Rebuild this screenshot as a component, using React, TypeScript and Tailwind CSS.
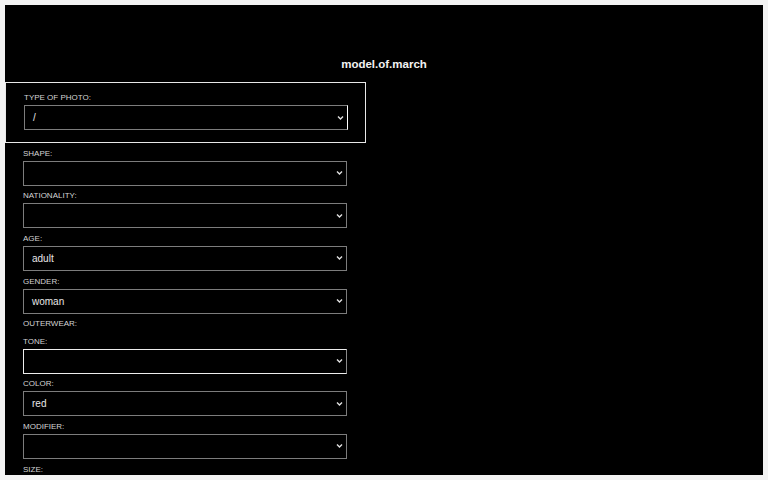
import React from "react";

type Field = {
  label: string;
  value?: string;
  heading?: boolean;
  focus?: boolean;
};

const fields: Field[] = [
  { label: "SHAPE:" },
  { label: "NATIONALITY:" },
  { label: "AGE:", value: "adult" },
  { label: "GENDER:", value: "woman" },
  { label: "OUTERWEAR:", heading: true },
  { label: "TONE:", focus: true },
  { label: "COLOR:", value: "red" },
  { label: "MODIFIER:" },
  { label: "SIZE:" },
];

function Chevron() {
  return (
    <svg
      className="pointer-events-none absolute right-[4px] top-1/2 -translate-y-1/2"
      width="7"
      height="5"
      viewBox="0 0 7 5"
      fill="none"
    >
      <path d="M1 1l2.5 2.5L6 1" stroke="#e0e0e0" strokeWidth="1.4" />
    </svg>
  );
}

function Select({ value, className }: { value?: string; className: string }) {
  return (
    <div className="relative">
      <div
        className={
          "h-[25px] border pl-2 text-[10px] leading-[23px] text-[#e8e8e8] " +
          className
        }
      >
        {value}
      </div>
      <Chevron />
    </div>
  );
}

function Label({ text }: { text: string }) {
  return (
    <div className="mb-px h-[12px] text-[8px] leading-[12px] text-[#d4d4d4]">
      {text}
    </div>
  );
}

export default function App() {
  return (
    <div
      className="h-[480px] w-[768px] bg-[#f3f3f3] p-[5px]"
      style={{ fontFamily: '"Liberation Sans", Arial, sans-serif' }}
    >
      <div className="h-full overflow-hidden bg-black pt-[51.5px]">
        <h1 className="h-[14px] text-center text-[11.5px] font-bold leading-[14px] text-[#f2f2f2]">
          model.of.march
        </h1>

        <div className="mt-[11.5px] w-[361px]">
          <div className="mb-[4.67px] border border-[#e8e8e8] pb-[12px] pl-[18px] pr-[17px] pt-[9px]">
            <Label text="TYPE OF PHOTO:" />
            <Select value="/" className="border-[#7c7c7c] border-r-white" />
          </div>

          {fields.map((f) =>
            f.heading ? (
              <div
                key={f.label}
                className="mb-[5.3px] h-[12px] pl-[18px] text-[8px] leading-[12px] text-[#d4d4d4]"
              >
                {f.label}
              </div>
            ) : (
              <div key={f.label} className="mb-[4.67px] w-[342px] pl-[18px]">
                <Label text={f.label} />
                <Select
                  value={f.value}
                  className={
                    f.focus
                      ? "border-[#ededed] border-r-[#8a8a8a]"
                      : "border-[#7c7c7c]"
                  }
                />
              </div>
            )
          )}
        </div>
      </div>
    </div>
  );
}
